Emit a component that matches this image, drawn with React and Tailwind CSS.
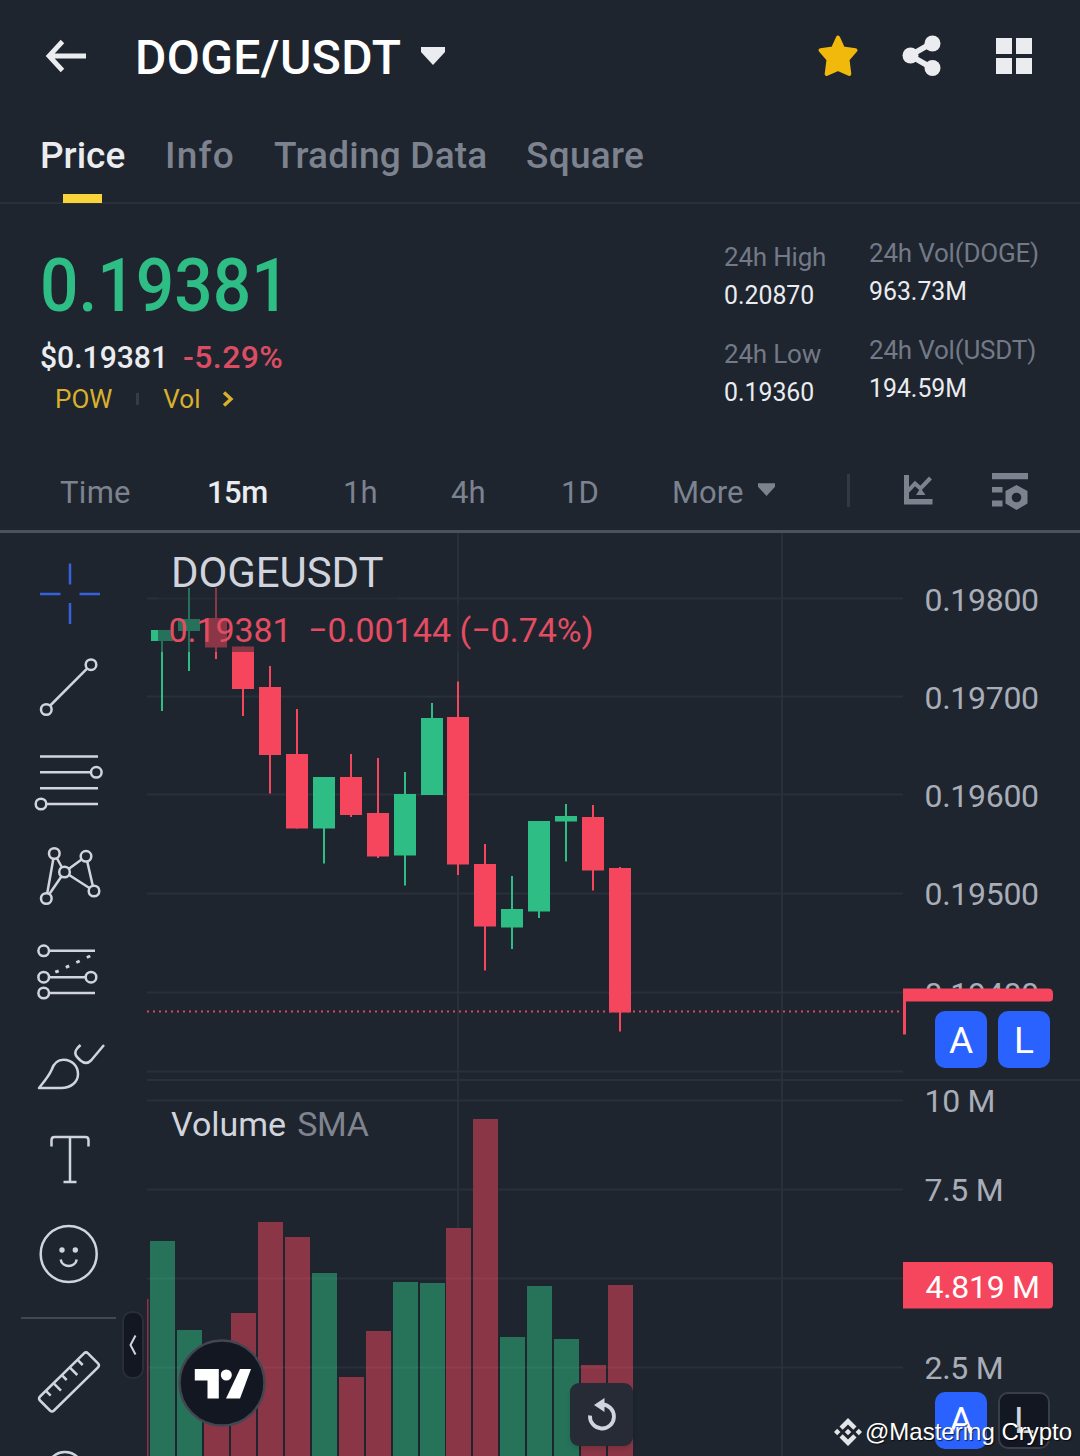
import React, { useState } from 'react';

const tabs = [
    { id: 'price', label: 'Price', width: 'w-[125px] tracking-[0px]' },
    { id: 'info', label: 'Info', width: 'w-[109px] tracking-[1.2px]' },
    { id: 'data', label: 'Trading Data', width: 'w-[252px] tracking-[0.2px]' },
    { id: 'square', label: 'Square', width: 'w-[130px] tracking-[0.3px]' }
];

const intervals = [
    { label: 'Time', width: 'w-[147px] tracking-[0.3px]' },
    { label: '15m', width: 'w-[136px] tracking-[-0.5px]' },
    { label: '1h', width: 'w-[108px]' },
    { label: '4h', width: 'w-[110px]' },
    { label: '1D', width: 'w-[111px]' }
];

const stats = [
    [
        { label: '24h High', value: '0.20870' },
        { label: '24h Low', value: '0.19360' }
    ],
    [
        { label: '24h Vol(DOGE)', value: '963.73M' },
        { label: '24h Vol(USDT)', value: '194.59M' }
    ]
];

// x, side, body top, body bottom, wick top, wick bottom, volume top
const candles = [
    [162, 'up', 630, 641, 630, 711, 1241],
    [189, 'up', 619, 631, 588, 671, 1330],
    [216, 'down', 618, 647.5, 588, 659, 1390],
    [243, 'down', 646.5, 689, 646.5, 716, 1313],
    [270, 'down', 687, 755, 666, 793.5, 1222],
    [297, 'down', 754, 828.5, 709, 828.5, 1237],
    [324, 'up', 777, 828.5, 777, 863.5, 1273],
    [351, 'down', 777, 815, 754, 817, 1377],
    [378, 'down', 813, 856.5, 758, 858, 1331],
    [405, 'up', 794, 855.5, 772, 885.5, 1282],
    [432, 'up', 718, 795, 703, 795, 1283],
    [458, 'down', 717, 864.5, 681.5, 875, 1228],
    [485, 'down', 864, 926.5, 844, 970.5, 1119],
    [512, 'up', 909, 927.5, 876, 949, 1337],
    [539, 'up', 821, 911.5, 821, 918, 1286],
    [566, 'up', 816, 821.5, 804, 861.5, 1339],
    [593, 'down', 817, 870.5, 805, 890.5, 1365],
    [620, 'down', 868, 1012.5, 867, 1031.5, 1285]
];

const gridRows = [598.5, 696.5, 794.5, 893.5, 992.5, 1071.5, 1100.5, 1189.5, 1278.5, 1367.5];

const axisLabels = [
    { y: 610.5, text: '0.19800' },
    { y: 708.5, text: '0.19700' },
    { y: 806.5, text: '0.19600' },
    { y: 904.5, text: '0.19500' },
    { y: 1004.5, text: '0.19400' },
    { y: 1112, text: '10 M' },
    { y: 1201, text: '7.5 M' },
    { y: 1379, text: '2.5 M' }
];

const Dot = ({ x, y }) => <circle cx={x} cy={y} r="5.3" className="fill-[#1e252f]" />;

const tools = [
    {
        id: 'cross',
        color: 'text-[#3562dc]',
        icon: <path d="M36 5.5V26.5M36 45V66M6 36H26.5M45.5 36H66" />
    },
    {
        id: 'trend',
        icon: <><path d="M12.3 57.5L57 12.7" /><Dot x={57} y={12.7} /><Dot x={12.3} y={57.5} /></>
    },
    {
        id: 'fib',
        icon: (
            <>
                <path d="M6 9.5H64M6 25.3H57M6 41.2H64M12 57H64" />
                <Dot x={62.3} y={25.3} />
                <Dot x={7} y={57} />
            </>
        )
    },
    {
        id: 'pattern',
        icon: (
            <>
                <path d="M12.3 57.5L20.3 12.5L30.5 31L12.3 57.5M30.5 31L52 15.3L60 50L30.5 31" />
                <Dot x={20.3} y={12.5} />
                <Dot x={52} y={15.3} />
                <Dot x={30.5} y={31} />
                <Dot x={12.3} y={57.5} />
                <Dot x={60} y={50} />
            </>
        )
    },
    {
        id: 'forecast',
        icon: (
            <>
                <path d="M10 14.8H61M10 41.2H57M10 57H61" />
                <path d="M21.3 36.2L24.7 34.8M31.8 31.3L35.2 29.8M42.3 26.5L45.7 25M52.8 21.5L56.2 20" strokeWidth="3" />
                <Dot x={9.7} y={14.8} />
                <Dot x={9.7} y={41.2} />
                <Dot x={9.7} y={57} />
                <Dot x={57} y={41.2} />
            </>
        )
    },
    {
        id: 'brush',
        icon: (
            <>
                <path d="M5 58H27C37 58 44 52 44 44C44 36 38 29.7 29.5 29.7C23 29.7 19.5 34 17.5 40C15 46 9 53 5 58Z" />
                <path d="M46.5 15L43.5 18C40.5 21.5 40.5 24.5 43.5 27.5L46.5 30.5C50 33.5 54 33.5 57 30.5L70 15" />
            </>
        )
    },
    {
        id: 'text',
        icon: <path d="M17.5 21.5V15C17.5 13 18.5 12 20.5 12H51.5C53.5 12 54.5 13 54.5 15V21.5M36 12V57M29.5 57H42.5" />
    },
    {
        id: 'smile',
        icon: (
            <>
                <circle cx="34.7" cy="35" r="28" />
                <path d="M26.7 40.5C28 49 41.4 49 42.7 40.5" />
                <circle cx="28" cy="31" r="2.7" fill="currentColor" stroke="none" />
                <circle cx="41.3" cy="31" r="2.7" fill="currentColor" stroke="none" />
            </>
        )
    }
];

const ToolIcon = ({ children, color = 'text-[#d1d4dc]' }) => (
    <svg width="72" height="72" viewBox="0 0 72 72" fill="none" stroke="currentColor" strokeWidth="2.5" strokeLinejoin="round" className={`block shrink-0 ${color}`}>
        {children}
    </svg>
);

const Caret = ({ className }) => (
    <svg viewBox="0 0 24 18" className={className} fill="currentColor">
        <path d="M0 0H24V5L12 18L0 5Z" />
    </svg>
);

const Header = () => (
    <header className="flex h-[112px] items-center pl-[45px] pr-[48px] text-[#eaecef]">
        <svg width="42" height="34" viewBox="0 0 42 34" fill="none" stroke="currentColor" strokeWidth="4.8">
            <path d="M41 17H4M17.5 2.5L4 17L17.5 31.5" />
        </svg>
        <h1 className="ml-[48px] w-[286px] whitespace-nowrap pt-[3px] text-[48px] font-medium leading-[60px] tracking-[0.4px] text-white">DOGE/USDT</h1>
        <Caret className="h-[18px] w-6" />
        <div className="ml-auto flex items-center">
            <svg width="42" height="44" viewBox="0 0 42 44" className="text-[#f0b90b]" fill="currentColor" stroke="currentColor" strokeWidth="4" strokeLinejoin="round">
                <path d="M21 3.5L26 14.5L38.5 16.2L30.5 25.5L32.3 40L21 35L9.7 40L11.5 25.5L3.5 16.2L16 14.5Z" />
            </svg>
            <svg width="40" height="42" viewBox="0 0 40 42" className="ml-[42px]" fill="currentColor">
                <path d="M31 8L9 20.5L31 33" fill="none" stroke="currentColor" strokeWidth="5.5" />
                <circle cx="9.5" cy="20.5" r="8" />
                <circle cx="31.5" cy="8.5" r="8" />
                <circle cx="31.5" cy="33" r="8" />
            </svg>
            <div className="ml-[55px] grid grid-cols-2 gap-1">
                <i className="size-4 bg-current" />
                <i className="size-4 bg-current" />
                <i className="size-4 bg-current" />
                <i className="size-4 bg-current" />
            </div>
        </div>
    </header>
);

const Tabs = () => {
    const [active, setActive] = useState('price');

    return (
        <nav className="flex h-[92px] border-b-2 border-[#2a303a] pl-[40px] pt-[24px] text-[37px] font-medium leading-10">
            {tabs.map(tab => (
                <button
                    key={tab.id}
                    type="button"
                    onClick={() => setActive(tab.id)}
                    className={`relative h-[67px] whitespace-nowrap pb-[27px] text-left ${tab.width} ${active === tab.id ? 'text-[#eaecef]' : 'text-[#7d828f]'}`}
                >
                    {tab.label}
                    {active === tab.id && <span className="absolute bottom-0 left-[23px] h-[9px] w-[39px] bg-[#f8d33a]" />}
                </button>
            ))}
        </nav>
    );
};

const Summary = () => (
    <section className="flex h-[250px] justify-between pl-[40px]">
        <div className="pt-[42px]">
            <div className="origin-left scale-x-[0.915] text-[74px] font-medium leading-[80px] text-[#2ebd85]">0.19381</div>
            <div className="mt-[11px] flex text-[32px] font-medium leading-10">
                <span className="w-[143px] origin-left scale-x-[0.94] text-[#eaecef]">$0.19381</span>
                <span className="tracking-[0.4px] text-[#dc4c63]">-5.29%</span>
            </div>
            <div className="mt-[7px] flex items-center pl-[15px] text-[26px] leading-[30px] text-[#d9b02c]">
                <span>POW</span>
                <span className="ml-6 h-3 w-[3px] bg-[#363c47]" />
                <span className="ml-6">Vol</span>
                <svg width="12" height="16" viewBox="0 0 12 16" fill="none" stroke="currentColor" strokeWidth="3.4" className="ml-[22px]">
                    <path d="M2 1.5L9 8L2 14.5" />
                </svg>
            </div>
        </div>
        <div className="flex pt-[34px] text-[26px] leading-[30px]">
            {stats.map((column, i) => (
                <div key={column[0].label} className={i === 0 ? 'flex w-[145px] flex-col gap-[29px] pt-1' : 'flex w-[211px] flex-col gap-[29px]'}>
                    {column.map(item => (
                        <div key={item.label} className="flex flex-col gap-2 whitespace-nowrap">
                            <span className="tracking-[-0.2px] text-[#737986]">{item.label}</span>
                            <span className="origin-left scale-x-[0.955] text-[#eaecef]">{item.value}</span>
                        </div>
                    ))}
                </div>
            ))}
        </div>
    </section>
);

const IntervalBar = () => {
    const [active, setActive] = useState('15m');

    return (
        <div className="flex h-[79px] items-center border-b-[3px] border-[#4c525d] pl-[60px] text-[31px] text-[#7d828f]">
            {intervals.map(item => (
                <button
                    key={item.label}
                    type="button"
                    onClick={() => setActive(item.label)}
                    className={`pt-[3px] text-left ${item.width} ${active === item.label ? 'font-medium text-[#eaecef]' : ''}`}
                >
                    {item.label}
                </button>
            ))}
            <button type="button" className="flex w-[175px] items-center pt-[3px]">
                <span className="w-[86px] text-left">More</span>
                <Caret className="mb-[9px] h-[13px] w-[17px]" />
            </button>
            <span className="mb-[3px] h-[33px] w-[3px] bg-[#333944]" />
            <svg width="30" height="30" viewBox="0 0 30 30" className="mb-1 ml-[54px]" fill="currentColor">
                <path d="M0 0H5V24H28.5V29.5H0Z" />
                <path d="M4 16L11 8.5L16.5 13.5L26.5 3" fill="none" stroke="currentColor" strokeWidth="4" />
                <path d="M16.5 13L21.5 20H12Z" />
            </svg>
            <svg width="37" height="37" viewBox="0 0 37 37" className="mb-0.5 ml-[58px]" fill="currentColor">
                <path d="M0 0H36V6.3H0ZM0 14H10.5V19.5H0ZM0 27.5H10.5V33.5H0Z" />
                <path fillRule="evenodd" d="M24.5 12L35.5 18V30.5L24.5 37L13.5 30.5V18ZM24.5 19.7A4.8 4.8 0 1 0 24.5 29.3A4.8 4.8 0 1 0 24.5 19.7Z" />
            </svg>
        </div>
    );
};

const Toolbar = () => (
    <aside className="relative flex w-[147px] shrink-0 flex-col pl-[34px] pt-[24.5px]">
        <div className="flex flex-col gap-[22.5px]">
            {tools.map(tool => <ToolIcon key={tool.id} color={tool.color}>{tool.icon}</ToolIcon>)}
        </div>
        <hr className="-ml-[13px] mb-[27.5px] mt-[25.5px] w-[95px] border-t-2 border-[#414753]" />
        <ToolIcon>
            <path d="M50 7.3Q52 5.3 54 7.3L64 17.3Q66 19.3 64 21.3L20 64.5Q18 66.5 16 64.5L6 54.5Q4 52.5 6 50.5Z" />
            <path d="M12.2 45.2L16.7 49.7M19.9 37.6L27 44.7M28.1 29.4L32.7 34M35.9 21.6L43.3 29M43.6 13.9L48.7 19" />
        </ToolIcon>
        <div className="mt-[22.5px]">
            <ToolIcon><circle cx="31" cy="29" r="18" /></ToolIcon>
        </div>
        <button type="button" className="absolute left-[122px] top-[778px] flex h-[68px] w-[22px] items-center justify-center rounded-[10px] border-2 border-[#292e39] bg-[#131722]">
            <svg width="8" height="20" viewBox="0 0 8 20" fill="none" stroke="#d1d4dc" strokeWidth="2">
                <path d="M6.5 0.5L1.5 10L6.5 19.5" />
            </svg>
        </button>
    </aside>
);

const Chart = () => (
    <svg width="933" height="923" viewBox="147 533 933 923" className="block font-[Roboto,sans-serif]">
        <g className="fill-[#2a303a]">
            {gridRows.map(y => <rect key={y} x="147" y={y - 1} width="756" height="2" />)}
            <rect x="147" y="1079" width="933" height="2" />
            <rect x="457" y="533" width="2" height="923" />
            <rect x="781" y="533" width="2" height="923" />
        </g>
        {candles.map(([x, side, , , , , volume]) => (
            <g key={x}>
                <rect x={x - 12} y={volume} width="25" height={1456 - volume} className={side === 'up' ? 'fill-[#26735a]' : 'fill-[#8b3646]'} />
                {gridRows.slice(-2).filter(y => y > volume).map(y => (
                    <rect key={y} x={x - 12} y={y - 1} width="25" height="2" className="fill-white/4" />
                ))}
            </g>
        ))}
        <rect x="147" y="1299" width="1.5" height="157" className="fill-[#8b3646]" />
        {candles.map(([x, side, top, bottom, high, low]) => (
            <g key={x} className={side === 'up' ? 'fill-[#2ebd85]' : 'fill-[#f6465d]'}>
                <rect x={x - 1} y={high} width="2" height={low - high} />
                <rect x={x - 11} y={top} width="22" height={bottom - top} />
            </g>
        ))}
        <path d="M147 1011.5H903" stroke="#d8485d" strokeWidth="2" strokeDasharray="2 4" />
        <g className="fill-[#a9adb7] text-[32px] tracking-[-0.3px]">
            {axisLabels.map(label => <text key={label.y} x="924.5" y={label.y}>{label.text}</text>)}
        </g>
        {/* last price tag, the buttons cover most of it */}
        <path d="M903 1001H1080V1036H903Z" className="fill-[#1e252f]" />
        <path d="M903 988.5H1048Q1053 988.5 1053 993.5V998Q1053 1001.5 1049 1001.5H906V1034.5H903Z" className="fill-[#f6465d]" />
        <path d="M903 1262H1049Q1053 1262 1053 1266V1304Q1053 1308.5 1049 1308.5H903Z" className="fill-[#f6465d]" />
        <text x="925.5" y="1297.5" className="fill-white text-[32px] tracking-[-0.3px]">4.819 M</text>
    </svg>
);

const Legend = () => (
    <div className="absolute left-[11px] top-[18px] flex flex-col items-start whitespace-nowrap font-[Roboto,sans-serif]">
        <div className="h-[52px] bg-[#1e252f]/50 pl-[13px] pr-[14px] text-[42px] leading-[44px] tracking-[-0.1px] text-[#d1d4dc]">DOGEUSDT</div>
        <div className="flex h-[49px] bg-[#1e252f]/50 pl-[10.5px] pr-[12px] text-[34px] leading-[54px] text-[#e44c62]">
            <span className="w-[139.5px] tracking-[-0.1px]">0.19381</span>
            <span>−0.00144 (−0.74%)</span>
        </div>
    </div>
);

const ScaleButtons = ({ className, logActive }) => (
    <div className={`absolute left-[788px] flex gap-[11px] font-[Roboto,sans-serif] text-[37px] leading-none ${className}`}>
        <button type="button" className="h-[57px] w-[52px] rounded-[10px] bg-[#2962ff] text-white">A</button>
        <button type="button" className={`h-[57px] w-[52px] rounded-[10px] ${logActive ? 'bg-[#2962ff] text-white' : 'border-2 border-[#3a3e49] bg-[#131722] text-[#d1d4dc]'}`}>L</button>
    </div>
);

const ChartArea = () => (
    <div className="relative">
        <Chart />
        <Legend />
        <div className="absolute left-[24px] top-[570px] flex gap-[11px] bg-[#1e252f]/50 pr-3 font-[Roboto,sans-serif] text-[34px] leading-[42px]">
            <span className="text-[#d1d4dc]">Volume</span>
            <span className="tracking-[-0.3px] text-[#80848f]">SMA</span>
        </div>
        <ScaleButtons className="top-[478px] *:pt-px" logActive />
        <ScaleButtons className="top-[859px]" />
        <svg width="88" height="88" viewBox="0 0 88 88" className="absolute left-[30.5px] top-[806px]">
            <circle cx="44" cy="44" r="42.5" fill="#131722" stroke="#434651" strokeWidth="2.5" />
            <g fill="#fff">
                <path d="M16.8 30H40.8V59.5H29.5V41.5H16.8Z" />
                <circle cx="48.3" cy="36" r="5.5" />
                <path d="M62 30H73L62 59.5H48Z" />
            </g>
        </svg>
        <button type="button" className="absolute left-[423px] top-[850px] flex size-[63px] items-center justify-center rounded-[9px] bg-[#262b36] shadow-md">
            <svg width="32" height="36" viewBox="0 0 32 36" fill="none" stroke="#d1d4dc" strokeWidth="3.8">
                <path d="M4 18.5A12 12 0 1 0 16 7.5" />
                <path d="M8 8L18.5 1V15Z" fill="#d1d4dc" stroke="none" />
            </svg>
        </button>
        <div className="absolute left-[687px] top-[882px] flex items-center whitespace-nowrap font-['Liberation_Sans',sans-serif] text-[24px] leading-[34px] text-white">
            <svg width="28" height="28" viewBox="0 0 28 28" fill="#e4e5e8">
                <path d="M14 0L22.5 8.5L19.3 11.7L14 6.4L8.7 11.7L5.5 8.5ZM3.2 10.8L6.4 14L3.2 17.2L0 14ZM24.8 10.8L28 14L24.8 17.2L21.6 14ZM14 10.8L17.2 14L14 17.2L10.8 14ZM14 28L5.5 19.5L8.7 16.3L14 21.6L19.3 16.3L22.5 19.5Z" />
            </svg>
            <span className="ml-[3px] [text-shadow:1px_1px_1px_rgba(0,0,0,0.7)]">@Mastering Crypto</span>
        </div>
    </div>
);

const App = () => (
    <main className="h-[1456px] w-[1080px] overflow-hidden bg-[#1e252f] font-[Roboto,sans-serif]">
        <Header />
        <Tabs />
        <Summary />
        <IntervalBar />
        <div className="flex h-[923px] overflow-hidden">
            <Toolbar />
            <ChartArea />
        </div>
    </main>
);

export default App;
